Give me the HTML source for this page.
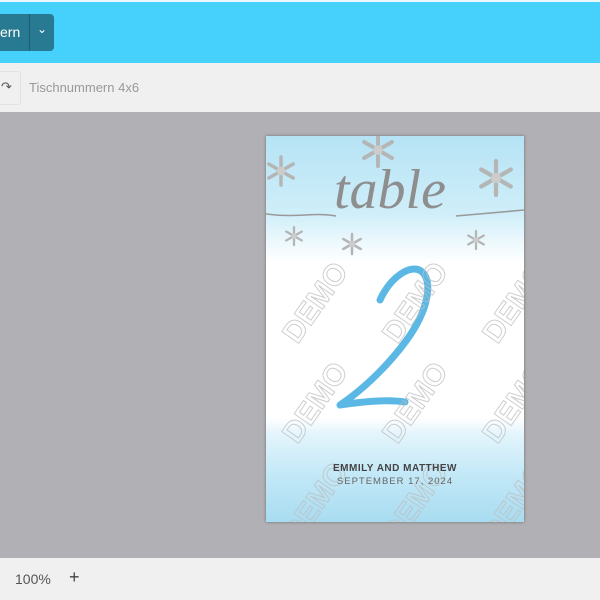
<!DOCTYPE html><html><head><style>
body{margin:0;width:600px;height:600px;overflow:hidden;font-family:"Liberation Sans",sans-serif;position:relative;background:#b1b1b5}
.top{position:absolute;left:0;top:2px;width:600px;height:61px;background:#45d1fb}
.btn{position:absolute;left:0;top:14px;width:54px;height:37px;background:#277a91;border-radius:0 4px 4px 0;color:#fff;font-size:14px}
.tb{position:absolute;left:0;top:63px;width:600px;height:49px;background:#f0f0f0}
.bb{position:absolute;left:0;top:558px;width:600px;height:42px;background:#f0f0f0}
.card{position:absolute;left:266px;top:136px;width:258px;height:386px;overflow:hidden;background:linear-gradient(#b5e3f5 0%,#cfeef9 20%,#eef9fd 28%,#fff 33%,#fff 73%,#e4f5fc 77%,#c2e8f7 88%,#a9dcf1 100%);box-shadow:0 0 3px rgba(0,0,0,.4)}
.demo{position:absolute;font-size:30px;font-weight:bold;color:transparent;-webkit-text-stroke:1px rgba(190,190,190,.75);transform:rotate(-55deg)}
</style></head><body>
<div style="position:absolute;top:0;left:0;width:600px;height:2px;background:#e8f8fd"></div>
<div class="top"></div>
<div class="btn"><span style="position:absolute;left:0;top:10px">ern</span><div style="position:absolute;left:29px;top:0;width:1px;height:37px;background:#1d5e70"></div><span style="position:absolute;left:37px;top:8px;font-size:12px">&#8964;</span></div>
<div class="tb"><div style="position:absolute;left:-4px;top:8px;width:23px;height:32px;border:1px solid #e2e2e2;border-radius:3px"></div><span style="position:absolute;left:1px;top:16px;font-size:13px;color:#555">&#8631;</span><span style="position:absolute;left:29px;top:17px;font-size:13px;color:#999">Tischnummern 4x6</span></div>
<div class="card">
<svg style="position:absolute;left:0;top:0" width="258" height="386">
<defs><g id="sf"><path d="M0 -10V10M-8.7 -5L8.7 5M-8.7 5L8.7 -5" stroke="#b5b5b5" stroke-width="2.5" stroke-linecap="round"/><circle r="3" fill="#ccc"/></g></defs>
<use href="#sf" transform="translate(15,35) scale(1.4)"/><use href="#sf" transform="translate(112,14) scale(1.6)"/><use href="#sf" transform="translate(230,42) scale(1.7)"/>
<use href="#sf" transform="translate(28,100) scale(.9)"/><use href="#sf" transform="translate(86,108) scale(1)"/><use href="#sf" transform="translate(210,104) scale(.9)"/>
<path d="M0 78 C30 82 50 76 70 80 M190 80 C215 78 235 76 258 74" stroke="#999" stroke-width="1.5" fill="none"/>
<path d="M114 164 C125 140 145 128 155 135 C168 145 162 175 140 205 C120 232 95 255 74 269 C95 266 120 263 139 266" fill="none" stroke="#5bb8e5" stroke-width="7" stroke-linecap="round" stroke-linejoin="round"/></svg>
<div style="position:absolute;left:68px;top:22px;font-family:'Liberation Serif',serif;font-style:italic;font-size:56px;color:#8e8e8e">table</div>
<div class="demo" style="left:5px;top:150px">DEMO</div><div class="demo" style="left:105px;top:150px">DEMO</div><div class="demo" style="left:205px;top:150px">DEMO</div>
<div class="demo" style="left:5px;top:250px">DEMO</div><div class="demo" style="left:105px;top:250px">DEMO</div><div class="demo" style="left:205px;top:250px">DEMO</div>
<div class="demo" style="left:5px;top:350px">DEMO</div><div class="demo" style="left:105px;top:350px">DEMO</div><div class="demo" style="left:205px;top:350px">DEMO</div>
<div style="position:absolute;left:0;width:258px;top:327px;text-align:center;font-size:10px;font-weight:bold;color:#444;letter-spacing:.5px">EMMILY AND MATTHEW</div>
<div style="position:absolute;left:0;width:258px;top:340px;text-align:center;font-size:9.5px;color:#666;letter-spacing:1px">SEPTEMBER 17, 2024</div>
</div>
<div class="bb"><span style="position:absolute;left:15px;top:13px;font-size:14px;color:#555">100%</span><span style="position:absolute;left:69px;top:9px;font-size:18px;color:#444">+</span></div>
</body></html>
